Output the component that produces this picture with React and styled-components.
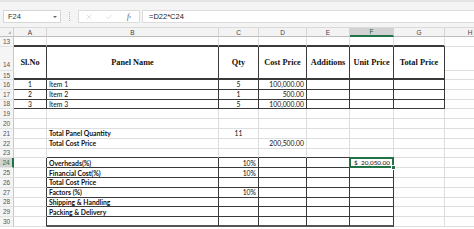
import React from "react";
import styled, { createGlobalStyle } from "styled-components";
import { X, Check } from "lucide-react";

const GRID = "#dedede";
const DARK = "#3a3a3a";
const GREEN = "#217346";

const lines = {
  grid: `1px solid ${GRID}`,
  thin: `1px solid ${DARK}`,
  med: `2px solid ${DARK}`,
  thick: `2px solid #555`,
};

const GlobalStyle = createGlobalStyle`
  body {
    margin: 0;
    background: #fff;
    overflow: hidden;
  }
`;

const Window = styled.div`
  width: 474px;
  height: 229px;
  overflow: hidden;
  background: #fff;
`;

const Toolbar = styled.div`
  box-sizing: border-box;
  height: 28px;
  display: flex;
  align-items: flex-start;
  padding-top: 8px;
  background: #f4f4f4;
  border-top: 2px solid #e4e4e4;
  border-bottom: 1px solid #dadada;
`;

const NameBox = styled.div`
  box-sizing: border-box;
  margin-left: 3px;
  width: 58px;
  height: 13px;
  display: flex;
  align-items: center;
  justify-content: space-between;
  padding: 0 3px 0 4px;
  background: #fff;
  border: 1px solid #d6d6d6;
  font: 7.5px "Liberation Sans", sans-serif;
  color: #333;
`;

const Caret = styled.span`
  width: 0;
  height: 0;
  border-left: 2px solid transparent;
  border-right: 2px solid transparent;
  border-top: 2px solid #666;
`;

const Grip = styled.span`
  margin: 2px 0 0 8px;
  height: 9px;
  border-left: 1.5px dotted #b8b8b8;
`;

const FxGroup = styled.div`
  box-sizing: border-box;
  margin-left: 8px;
  width: 62px;
  height: 13px;
  display: flex;
  align-items: center;
  background: #fff;
  border: 1px solid #dcdcdc;
`;

const FxButton = styled.span`
  width: 20px;
  display: flex;
  align-items: center;
  justify-content: center;
  color: ${(p) => (p.$muted ? "#c4c4c4" : "#555")};
  font: italic 7.5px "Liberation Serif", serif;
  sub {
    font-size: 4.5px;
    vertical-align: -1px;
  }
`;

const FormulaInput = styled.div`
  box-sizing: border-box;
  margin-left: 2px;
  flex: 1;
  height: 13px;
  display: flex;
  align-items: center;
  padding-left: 6px;
  background: #fff;
  border: 1px solid #dcdcdc;
  border-right: none;
  font: 7.5px "Liberation Sans", sans-serif;
  color: #222;
`;

const Sheet = styled.div`
  display: grid;
  grid-template-columns: 14px 33px 172px 40px 48px 43px 44px 51px 51px;
  grid-template-rows: 9px 10px 24px 9px repeat(16, 9.8px);
`;

const Corner = styled.div`
  box-sizing: border-box;
  display: flex;
  align-items: flex-end;
  justify-content: flex-end;
  padding: 0 2px 2px 0;
  background: #f3f3f3;
  border-right: 1px solid #cfcfcf;
  border-bottom: 1px solid #bdbdbd;
  &::after {
    content: "";
    border-left: 3px solid transparent;
    border-bottom: 3px solid #b3b3b3;
  }
`;

const ColHead = styled.div`
  box-sizing: border-box;
  display: flex;
  align-items: center;
  justify-content: center;
  background: ${(p) => (p.$active ? "#d3d3d3" : "#f3f3f3")};
  border-right: 1px solid #d4d4d4;
  border-bottom: ${(p) => (p.$active ? `2px solid ${GREEN}` : "1px solid #bdbdbd")};
  color: ${(p) => (p.$active ? "#1d5e3a" : "#444")};
  font: 6.5px "Liberation Sans", sans-serif;
`;

const RowHead = styled.div`
  box-sizing: border-box;
  display: flex;
  align-items: ${(p) => (p.$tall ? "flex-end" : "center")};
  justify-content: center;
  padding-bottom: ${(p) => (p.$tall ? "2px" : "0")};
  background: ${(p) => (p.$active ? "#d3d3d3" : "#f5f5f5")};
  border-right: ${(p) => (p.$active ? `2px solid ${GREEN}` : "1px solid #c8c8c8")};
  border-bottom: 1px solid #e2e2e2;
  color: ${(p) => (p.$active ? GREEN : "#555")};
  font: 6.5px "Liberation Sans", sans-serif;
`;

const justify = { left: "flex-start", center: "center", right: "flex-end" };

const Cell = styled.div`
  box-sizing: border-box;
  position: relative;
  grid-row: span ${(p) => p.$span || 1};
  display: flex;
  align-items: center;
  justify-content: ${(p) => justify[p.$align || "left"]};
  padding: 0 2px;
  white-space: nowrap;
  font-family: ${(p) => (p.$serif ? '"Liberation Serif", serif' : "Lato, sans-serif")};
  font-size: ${(p) => (p.$serif ? "8.3px" : "6.8px")};
  font-weight: ${(p) => (p.$bold ? 700 : 400)};
  color: #111;
  border-right: ${(p) => (p.$r ? lines.thin : lines.grid)};
  border-bottom: ${(p) => lines[p.$b || "grid"]};

  ${(p) =>
    p.$selected &&
    `
    padding: 0;
    &::after {
      content: "";
      position: absolute;
      left: -1px;
      top: -1px;
      right: -1px;
      bottom: -1px;
      border: 2px solid ${GREEN};
    }
    &::before {
      content: "";
      position: absolute;
      right: -3px;
      bottom: -3px;
      width: 3px;
      height: 3px;
      background: ${GREEN};
      border: 1px solid #fff;
      z-index: 2;
    }
  `}
`;

const Money = styled.span`
  flex: 1;
  display: flex;
  justify-content: space-between;
  padding: 0 3px 0 4px;
  font-size: 6.4px;
`;

const COLS = ["A", "B", "C", "D", "E", "F", "G", "H"];

const headers = ["Sl.No", "Panel Name", "Qty", "Cost Price", "Additions", "Unit Price", "Total Price"];

const items = [
  ["1", "Item 1", "5", "100,000.00"],
  ["2", "Item 2", "1", "500.00"],
  ["3", "Item 3", "5", "100,000.00"],
];

const costs = [
  ["Overheads(%)", "10%"],
  ["Financial Cost(%)", "10%"],
  ["Total Cost Price", ""],
  ["Factors (%)", "10%"],
  ["Shipping & Handling", ""],
  ["Packing & Delivery", ""],
  ["", ""],
];

// one spec per cell, null where a merged cell covers it
const buildRows = () => {
  const rows = [];
  const blank = () => COLS.map(() => ({}));

  const r13 = blank();
  for (let i = 0; i < 7; i++) r13[i].b = "med";
  rows.push({ n: 13, cells: r13 });

  const r14 = blank();
  headers.forEach((h, i) => {
    r14[i] = { text: h, serif: true, bold: true, align: "center", span: 2, r: true, b: "med" };
  });
  rows.push({ n: 14, tall: true, cells: r14 });
  rows.push({ n: 15, cells: COLS.map((c) => (c === "H" ? {} : null)) });

  items.forEach(([no, name, qty, cost], k) => {
    const r = blank();
    for (let i = 0; i < 7; i++) {
      r[i].r = true;
      r[i].b = "thin";
    }
    Object.assign(r[0], { text: no, align: "center" });
    Object.assign(r[1], { text: name });
    Object.assign(r[2], { text: qty, align: "center" });
    Object.assign(r[3], { text: cost, align: "right" });
    rows.push({ n: 16 + k, cells: r });
  });

  rows.push({ n: 19, cells: blank() });
  rows.push({ n: 20, cells: blank() });

  const r21 = blank();
  Object.assign(r21[1], { text: "Total Panel Quantity", bold: true });
  Object.assign(r21[2], { text: "11", align: "center" });
  rows.push({ n: 21, cells: r21 });

  const r22 = blank();
  Object.assign(r22[1], { text: "Total Cost Price", bold: true });
  Object.assign(r22[3], { text: "200,500.00", align: "right" });
  rows.push({ n: 22, cells: r22 });

  const r23 = blank();
  for (let i = 1; i < 6; i++) r23[i].b = "thin";
  rows.push({ n: 23, cells: r23 });

  costs.forEach(([label, pct], k) => {
    const r = blank();
    r[0].r = true;
    for (let i = 1; i < 6; i++) {
      r[i].r = true;
      r[i].b = k === costs.length - 1 ? "thick" : "thin";
    }
    Object.assign(r[1], { text: label, bold: true });
    Object.assign(r[2], { text: pct, align: "right" });
    if (k === 0) Object.assign(r[5], { money: "20,050.00", selected: true });
    rows.push({ n: 24 + k, cells: r });
  });

  return rows;
};

const rows = buildRows();

export default function App() {
  return (
    <Window>
      <GlobalStyle />
      <Toolbar>
        <NameBox>
          F24
          <Caret />
        </NameBox>
        <Grip />
        <FxGroup>
          <FxButton $muted>
            <X size={8} strokeWidth={1.5} />
          </FxButton>
          <FxButton $muted>
            <Check size={8} strokeWidth={1.5} />
          </FxButton>
          <FxButton>
            f<sub>x</sub>
          </FxButton>
        </FxGroup>
        <FormulaInput>=D22*C24</FormulaInput>
      </Toolbar>

      <Sheet>
        <Corner />
        {COLS.map((c) => (
          <ColHead key={c} $active={c === "F"}>
            {c}
          </ColHead>
        ))}

        {rows.map((row) => (
          <React.Fragment key={row.n}>
            <RowHead $active={row.n === 24} $tall={row.tall}>
              {row.n}
            </RowHead>
            {row.cells.map((cell, i) =>
              cell ? (
                <Cell
                  key={COLS[i]}
                  $align={cell.align}
                  $bold={cell.bold}
                  $serif={cell.serif}
                  $span={cell.span}
                  $r={cell.r}
                  $b={cell.b}
                  $selected={cell.selected}
                >
                  {cell.money ? (
                    <Money>
                      <span>$</span>
                      <span>{cell.money}</span>
                    </Money>
                  ) : (
                    cell.text
                  )}
                </Cell>
              ) : null
            )}
          </React.Fragment>
        ))}
      </Sheet>
    </Window>
  );
}
